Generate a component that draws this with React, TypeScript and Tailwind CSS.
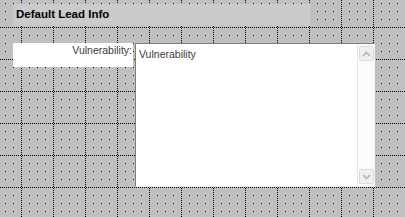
import React from "react";

function Grid() {
  return (
    <svg className="absolute inset-0" width={405} height={217} shapeRendering="crispEdges">
      <defs>
        <pattern id="g" width={32} height={32} patternUnits="userSpaceOnUse">
          {[5, 13, 29].map((x) =>
            [3, 11, 19].map((y) => (
              <g key={`${x}-${y}`}>
                <rect x={x} y={y} width={1} height={1} fill="#000" />
                <rect x={x + 1} y={y} width={1} height={1} fill="#e8e8e8" />
              </g>
            ))
          )}
          <line x1={21.5} y1={0} x2={21.5} y2={32} stroke="#000" strokeWidth={1} strokeDasharray="1 1" />
          <line x1={0} y1={27.5} x2={32} y2={27.5} stroke="#000" strokeWidth={1} strokeDasharray="1 1" />
        </pattern>
      </defs>
      <rect width={405} height={217} fill="url(#g)" />
    </svg>
  );
}

function Chevron({ up }: { up?: boolean }) {
  return (
    <svg width={9} height={6} viewBox="0 0 9 6">
      <path
        d={up ? "M1 5 L4.5 1.5 L8 5" : "M1 1 L4.5 4.5 L8 1"}
        fill="none"
        stroke="#b4b4b4"
        strokeWidth={1.6}
      />
    </svg>
  );
}

export default function App() {
  return (
    <div
      className="relative w-[405px] h-[217px] overflow-hidden bg-[#c0c0c0]"
      style={{ fontFamily: '"Liberation Sans", Arial, sans-serif' }}
    >
      <Grid />
      <div className="relative flex flex-col">
        <div className="ml-[13px] mt-[4px] w-[297px] h-[22px] bg-[#cbcbcb] flex items-center pl-[3px]">
          <span className="text-[11.5px] font-bold text-black leading-none">Default Lead Info</span>
        </div>
        <div className="flex mt-[17px]">
          <div className="ml-[13px] w-[120px] h-[24px] bg-white text-right pr-[1px] pt-[1px] text-[10.5px] leading-[12px] text-[#3a3a3a]">
            Vulnerability:
          </div>
          <div className="ml-[2px] w-[240px] h-[144px] bg-white border-t border-l border-[#857f60] border-r-[#f4f4f4] border-b-[#f4f4f4] border-r border-b flex">
            <div className="flex-1 pl-[3px] pt-[4px] text-[10.5px] text-[#3a3a3a] leading-[12px]">Vulnerability</div>
            <div className="w-[17px] border-l border-[#e6e6e6] bg-[#fbfbfb] flex flex-col justify-between items-center py-[2px]">
              <div className="w-[15px] h-[15px] rounded-[2px] border border-[#dcdcdc] bg-[#efefef] flex items-center justify-center">
                <Chevron up />
              </div>
              <div className="w-[15px] h-[15px] rounded-[2px] border border-[#dcdcdc] bg-[#efefef] flex items-center justify-center">
                <Chevron />
              </div>
            </div>
          </div>
        </div>
      </div>
    </div>
  );
}
